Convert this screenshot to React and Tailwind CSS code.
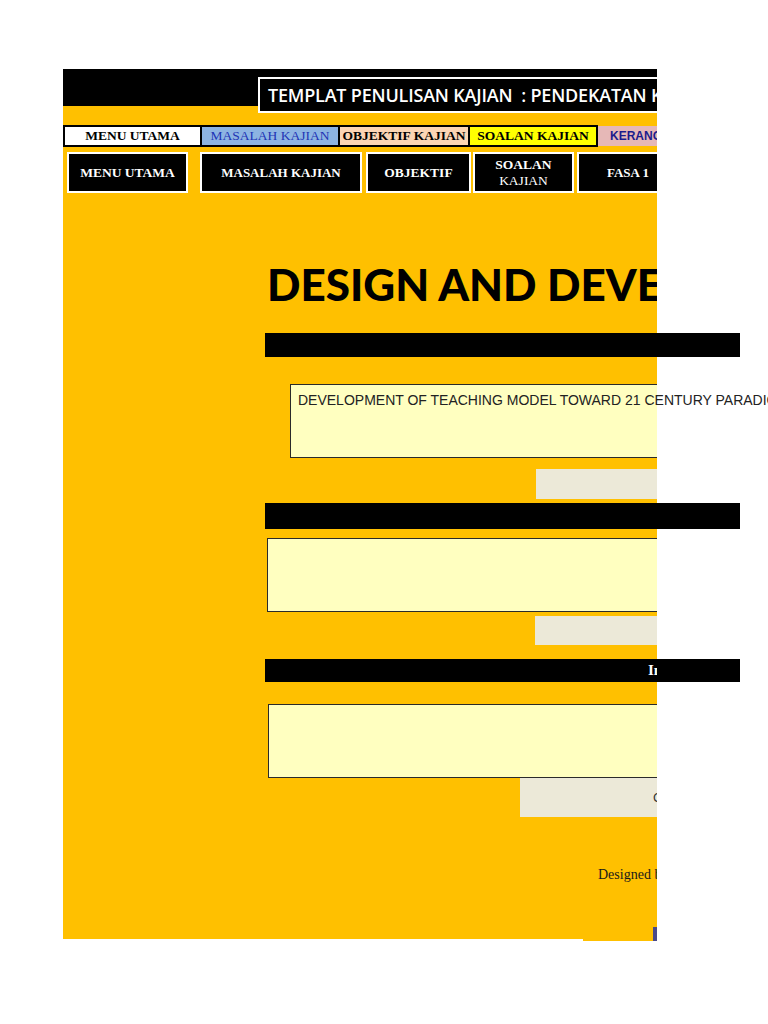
import React from 'react'

const serif = { fontFamily: '"Liberation Serif", "Times New Roman", serif' }
const sans = { fontFamily: '"Liberation Sans", Arial, sans-serif' }

const buttons = [
  { label: 'MENU UTAMA', cls: 'ml-[4px] w-[121px] text-[13.5px]' },
  { label: 'MASALAH KAJIAN', cls: 'ml-[12px] w-[162px] text-[13px]' },
  { label: 'OBJEKTIF', cls: 'ml-[4px] w-[105px] text-[13.5px]' },
  { label: 'SOALAN|KAJIAN', cls: 'ml-[2px] w-[101px] text-[13.5px]' },
  { label: 'FASA 1', cls: 'ml-[3px] w-[102px] text-[13px]' },
]

const SectionBar = ({ className = '', children }) => (
  <div className={`ml-[202px] w-[475px] bg-black shrink-0 ${className}`}>{children}</div>
)

const InputBox = ({ className = '', children }) => (
  <div className={`h-[74px] border border-r-0 border-[#2a2a2a] bg-[#ffffc0] ${className}`}>{children}</div>
)

export default function App() {
  return (
    <div className="min-h-[1024px] bg-white pt-[69px] pl-[63px]">
      <div className="flex w-[594px] flex-col bg-[#ffc000]">
        {/* top bar + title box */}
        <div className="h-[37px] w-full bg-black" />
        <div className="ml-[195px] -mt-[29px] h-[36px] w-[399px] overflow-hidden border-2 border-r-0 border-white bg-black">
          <div
            className="whitespace-nowrap pl-[8px] text-[18px] font-semibold leading-[32px] tracking-[-0.2px] text-white"
            style={{ fontFamily: '"Open Sans", sans-serif' }}
          >
            TEMPLAT PENULISAN KAJIAN&nbsp; : PENDEKATAN KAJIAN REKA BENTUK DAN PEMBANGUNAN
          </div>
        </div>

        {/* menu strip */}
        <div className="mt-[12px] flex items-center">
          <div className="flex gap-[2px] bg-black p-[2px]" style={serif}>
            <div className="flex h-[18px] w-[135px] items-center justify-center bg-white text-[13.5px] font-bold text-black">MENU UTAMA</div>
            <div className="flex h-[18px] w-[136px] items-center justify-center whitespace-nowrap bg-[#8db4e2] text-[13.5px] text-[#1f35b5]">MASALAH KAJIAN</div>
            <div className="flex h-[18px] w-[128px] items-center justify-center whitespace-nowrap bg-[#fcd5b4] text-[13.5px] font-bold text-black">OBJEKTIF KAJIAN</div>
            <div className="flex h-[18px] w-[126px] items-center justify-center whitespace-nowrap bg-[#ffff00] text-[13.5px] font-bold text-black">SOALAN KAJIAN</div>
          </div>
          <div className="h-[20px] w-[142px] bg-[#e6b8b7]">
            <div className="w-[59px] overflow-hidden whitespace-nowrap pl-[12px] text-[12px] font-bold leading-[20px] text-[#1c1c8c]" style={sans}>
              KERANGKA KAJIAN
            </div>
          </div>
        </div>

        {/* buttons */}
        <div className="mt-[5px] flex h-[41px] w-full overflow-hidden" style={serif}>
          {buttons.map((b) => (
            <div
              key={b.label}
              className={`flex shrink-0 flex-col items-center justify-center border-2 border-white bg-black font-bold leading-[16px] text-white ${b.cls}`}
            >
              {b.label.split('|').map((line, i) => (
                <span key={line} className={i === 1 ? 'font-normal' : ''}>{line}</span>
              ))}
            </div>
          ))}
        </div>

        {/* heading */}
        <div className="ml-[204px] mt-[69px] w-[390px] overflow-hidden">
          <div
            className="whitespace-nowrap text-[44px] font-black leading-[44px] text-black"
            style={{ fontFamily: 'Lato, sans-serif' }}
          >
            DESIGN AND DEVELOPMENT
          </div>
        </div>

        <SectionBar className="mt-[27px] h-[24px]" />

        <InputBox className="ml-[227px] mt-[27px] w-[367px]">
          <div className="whitespace-nowrap pl-[7px] pt-[7px] text-[14px] leading-[16px] text-[#222]" style={sans}>
            DEVELOPMENT OF TEACHING MODEL TOWARD 21 CENTURY PARADIGM
          </div>
        </InputBox>
        <div className="ml-[473px] mt-[11px] h-[30px] w-[121px] bg-[#ece9d8]" />

        <SectionBar className="mt-[4px] h-[26px]" />
        <InputBox className="ml-[204px] mt-[9px] w-[390px]" />
        <div className="ml-[472px] mt-[4px] h-[29px] w-[122px] bg-[#ece9d8]" />

        <SectionBar className="mt-[14px] h-[23px]">
          <div className="w-[392px] overflow-hidden whitespace-nowrap pl-[383px] text-[15px] font-bold leading-[23px] text-white" style={serif}>
            Introduction
          </div>
        </SectionBar>
        <InputBox className="ml-[205px] mt-[22px] w-[389px]" />
        <div className="ml-[457px] h-[39px] w-[137px] overflow-hidden bg-[#ece9d8]">
          <div className="whitespace-nowrap pl-[133px] text-[13px] leading-[39px] text-[#333]" style={sans}>
            CONTOH
          </div>
        </div>

        {/* footer */}
        <div className="ml-[535px] mt-[50px] w-[59px] overflow-hidden">
          <div className="whitespace-nowrap text-[14px] leading-[16px] text-[#1a1a1a]" style={serif}>
            Designed by
          </div>
        </div>
        <div className="mt-[44px] flex justify-end">
          <div className="h-[12px] w-[4px] bg-[#4a4a8a]" />
        </div>
      </div>
      <div className="ml-[520px] flex h-[2px] w-[74px]">
        <div className="w-[70px] bg-[#ffc000]" />
        <div className="w-[4px] bg-[#4a4a8a]" />
      </div>
    </div>
  )
}
